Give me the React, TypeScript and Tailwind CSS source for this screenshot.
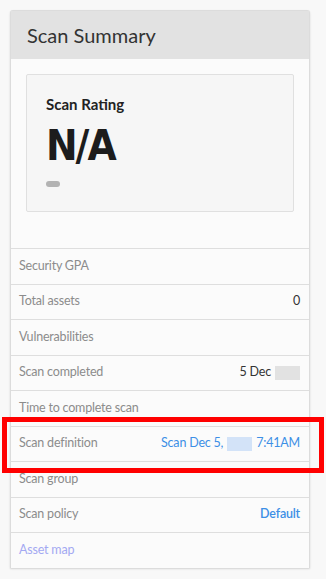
import React from "react";

const font = { fontFamily: "Lato, 'Open Sans', sans-serif" };

function Row({ label, children, labelClass }: { label: string; children?: React.ReactNode; labelClass?: string }) {
  return (
    <div className="flex h-[35.5px] items-center justify-between border-t border-[#dedede] pl-[8px] pr-[9px] text-[12.5px] tracking-[-0.2px]">
      <span className={labelClass ?? "text-[#8c8c8c]"}>{label}</span>
      {children}
    </div>
  );
}

export default function App() {
  return (
    <div className="relative min-h-[579px] w-[326px] bg-[#f8f8f8] pt-[10px] pl-[10px]" style={font}>
      <div className="w-[300px] rounded-t-[3px] border border-b-0 border-[#dcdcdc] bg-[#fbfbfb] shadow-[0_1px_2px_rgba(0,0,0,0.15)]">
        <div className="flex h-[48px] items-center bg-[#e2e2e2] pl-[16px] text-[20px] text-[#333]">Scan Summary</div>
        <div className="px-[15px] pt-[15px] pb-[36px]">
          <div className="h-[138px] rounded-[2px] border border-[#e0e0e0] bg-[#f6f6f6] pl-[19px] pt-[20px]">
            <div className="text-[15px] font-bold leading-[18px] text-[#222]">Scan Rating</div>
            <div
              className="mt-[9px] text-[42px] font-black leading-[48px] tracking-[-2px] text-[#1c1c1c]"
              style={{ fontFamily: "'DejaVu Sans Condensed', Lato, sans-serif" }}
            >
              N/A
            </div>
            <div className="mt-[11px] h-[6px] w-[14px] rounded-full bg-[#b3b3b3]" />
          </div>
        </div>
        <Row label="Security GPA" />
        <Row label="Total assets">
          <span className="text-[#333]">0</span>
        </Row>
        <Row label="Vulnerabilities" />
        <Row label="Scan completed">
          <span className="flex items-center text-[#333]">
            5 Dec<span className="ml-[4px] inline-block h-[14px] w-[25px] bg-[#e2e2e2]" />
          </span>
        </Row>
        <Row label="Time to complete scan" />
        <Row label="Scan definition">
          <span className="flex items-center text-[#3d8fe6]">
            Scan Dec 5,<span className="ml-[4px] mr-[4px] inline-block h-[14px] w-[25px] bg-[#d3e3f8]" />7:41AM
          </span>
        </Row>
        <Row label="Scan group" />
        <Row label="Scan policy">
          <span className="font-semibold text-[#3d8fe6]">Default</span>
        </Row>
        <Row label="Asset map" labelClass="text-[#a3a9f2]" />
      </div>
      <div className="pointer-events-none absolute left-[2px] top-[417px] h-[56px] w-[322px] border-[5px] border-[#ff0000]" />
    </div>
  );
}
